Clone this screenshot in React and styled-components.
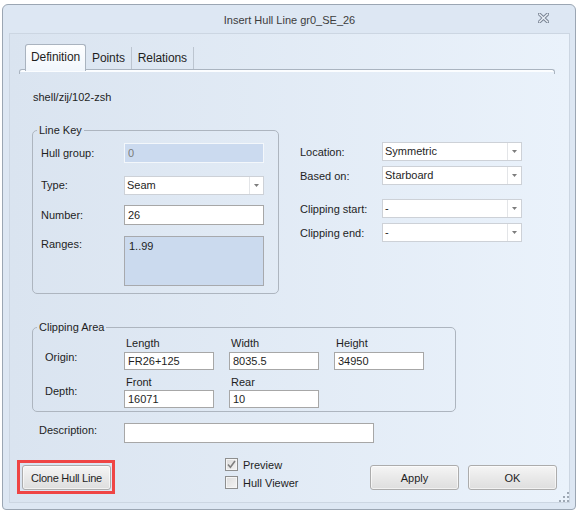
import React from 'react';
import styled, { createGlobalStyle } from 'styled-components';

const Global = createGlobalStyle`
  html, body { margin: 0; padding: 0; background: #ffffff; }
  body {
    width: 578px; height: 514px; overflow: hidden;
    font-family: "Liberation Sans", Arial, sans-serif;
    font-size: 11px; color: #1e1e1e;
  }
  * { box-sizing: border-box; }
`;

const Window = styled.div`
  margin: 4px 0 0 2px;
  width: 574px;
  height: 506px;
  border: 1px solid #9ba6b3;
  border-radius: 6px 6px 4px 4px;
  background: #dde7f3;
  padding: 0 5px 6px 6px;
  display: flex;
  flex-direction: column;
`;

const TitleBar = styled.div`
  height: 28px;
  display: grid;
  grid-template-columns: 1fr auto 1fr;
  align-items: center;
`;

const Title = styled.div`
  grid-column: 2;
  font-size: 11px;
  color: #3c3c3c;
  line-height: 14px;
  padding-top: 1px;
`;

const Close = styled.div`
  grid-column: 3;
  justify-self: end;
  align-self: start;
  margin: 8px 21px 0 0;
  width: 11px;
  height: 10px;
  display: flex;
`;

const Client = styled.div`
  flex: 1;
  position: relative;
  border: 1px solid #ccd6e2;
  background: linear-gradient(to right, #dae4f0, #eaf2fb);
  display: flex;
  flex-direction: column;
`;

const TabControl = styled.div`
  margin: 10px 0 0 9px;
  width: 536px;
`;

const TabList = styled.div`
  display: flex;
  align-items: flex-end;
  height: 25px;
  padding-left: 6px;
`;

const Tab = styled.div`
  position: relative;
  z-index: ${p => (p.$active ? 1 : 0)};
  height: ${p => (p.$active ? 27 : 22)}px;
  margin-bottom: ${p => (p.$active ? -2 : 0)}px;
  padding: ${p => (p.$active ? '0 5px 2px' : '0 6px 0')};
  display: flex;
  align-items: center;
  font-size: 12px;
  letter-spacing: -0.1px;
  color: #1e1e1e;
  border-right: 1px solid ${p => (p.$active ? '#a9b3bf' : '#bcc5d0')};
  ${p => p.$active && `
    border-top: 1px solid #a9b3bf;
    border-left: 1px solid #a9b3bf;
    border-radius: 3px 3px 0 0;
    background: linear-gradient(#fdfeff, #f1f6fc);
  `}
`;

const PanelTop = styled.div`
  height: 5px;
  border: 1px solid #aab4c0;
  border-bottom: none;
  border-radius: 3px 3px 0 0;
  background: linear-gradient(to bottom, #fbfdff 0, #fbfdff 2px, transparent 2px);
`;

const Page = styled.div`
  padding-left: 13px;
`;

const PathText = styled.div`
  margin: 16px 0 0 1px;
  line-height: 14px;
`;

const TopSection = styled.div`
  margin-top: 19px;
  display: flex;
  align-items: flex-start;
`;

const GroupBox = styled.fieldset`
  margin: ${p => p.$mt || 0}px 0 0 0;
  padding: 0;
  min-width: 0;
  width: ${p => p.$w}px;
  height: ${p => p.$h}px;
  border: 1px solid #adb5bf;
  border-radius: 5px;
`;

const Legend = styled.legend`
  margin-left: 4px;
  padding: 0 2px;
  line-height: 14px;
  font-size: 11px;
`;

const GroupInner = styled.div`
  padding: ${p => p.$pt}px 0 0 ${p => p.$pl}px;
`;

const FormRow = styled.div`
  display: flex;
  align-items: ${p => (p.$top ? 'flex-start' : 'center')};
  margin-top: ${p => p.$gap || 0}px;
`;

const Label = styled.div`
  width: ${p => p.$w}px;
  flex: none;
  line-height: 13px;
  padding-top: ${p => p.$pt || 0}px;
  margin-left: ${p => p.$ml || 0}px;
`;

const TextBox = styled.input`
  width: ${p => p.$w}px;
  height: ${p => p.$h}px;
  margin: 0;
  padding: 0 0 0 3px;
  border: 1px solid ${p => (p.$disabled ? '#f3f7fb' : '#a7a7a7')};
  background: ${p => (p.$disabled ? '#cbdaef' : '#ffffff')};
  color: ${p => (p.$disabled ? '#7a7a7a' : '#1e1e1e')};
  font: 11px "Liberation Sans", Arial, sans-serif;
  outline: none;
  border-radius: 0;
`;

const TextArea = styled.textarea`
  width: 140px;
  height: 50px;
  margin: 0;
  padding: 3px 0 0 4px;
  border: 1px solid #a7a9ad;
  background: #cbdaee;
  color: #1e1e1e;
  font: 11px "Liberation Sans", Arial, sans-serif;
  line-height: 13px;
  resize: none;
  outline: none;
  overflow: hidden;
`;

const SelectBox = styled.div`
  width: 140px;
  height: 19px;
  background: #ffffff;
  border: 1px solid #cdd1d7;
  display: flex;
  align-items: stretch;
`;

const SelectValue = styled.span`
  flex: 1;
  padding-left: 2px;
  line-height: 17px;
`;

const SelectArrow = styled.span`
  width: 14px;
  border-left: 1px solid #e3e5e8;
  display: flex;
  align-items: center;
  justify-content: center;
`;

const RightCol = styled.div`
  margin-left: 21px;
  padding-top: 19px;
`;

const ClipGrid = styled.div`
  display: grid;
  grid-template-columns: 64px 90px 90px 90px;
  grid-template-rows: 15px 20px 18px 19px;
  column-gap: 15px;
  padding: 2px 0 0 12px;
`;

const GridText = styled.div`
  grid-row: ${p => p.$row};
  grid-column: ${p => p.$col};
  align-self: ${p => p.$align || 'start'};
  line-height: ${p => p.$lh || 13}px;
  margin-top: ${p => p.$shift || 0}px;
  padding-left: ${p => (p.$col > 1 ? 2 : 0)}px;
`;

const GridField = styled(TextBox)`
  grid-row: ${p => p.$row};
  grid-column: ${p => p.$col};
  align-self: ${p => p.$align || 'center'};
`;

const DescRow = styled.div`
  margin-top: 11px;
  display: flex;
  align-items: flex-start;
`;

const BottomBar = styled.div`
  margin-top: 15px;
  display: flex;
  align-items: flex-start;
`;

const Highlight = styled.div`
  margin: 2px 0 0 7px;
  border: 3px solid #ef4545;
  padding: 2px 1px 1px 2px;
`;

const Button = styled.button`
  width: 89px;
  height: 25px;
  margin: ${p => p.$m || 0};
  padding: 0;
  border: 1px solid #acacac;
  border-radius: 3px;
  background: linear-gradient(#f5f5f5, #e9e9e9 50%, #dedede);
  font: 11px "Liberation Sans", Arial, sans-serif;
  letter-spacing: ${p => p.$ls || 0}px;
  color: #1e1e1e;
  box-shadow: inset 0 0 0 1px rgba(255,255,255,0.6);
`;

const CheckGroup = styled.div`
  margin-left: 110px;
  display: flex;
  flex-direction: column;
  gap: 5px;
`;

const CheckRow = styled.div`
  display: flex;
  align-items: center;
  height: 13px;
`;

const CheckBox = styled.span`
  width: 13px;
  height: 13px;
  border: 1px solid #8e8f8f;
  background: linear-gradient(135deg, #dcdcdc, #f4f4f4);
  box-shadow: inset 0 0 0 1px #f5f5f5;
  display: flex;
  align-items: center;
  justify-content: center;
`;

const CheckLabel = styled.span`
  margin-left: 5px;
  line-height: 13px;
  padding-top: 1px;
`;

const Grip = styled.svg`
  position: absolute;
  right: 0;
  bottom: 0;
`;

const Arrow = () => (
  <svg width="5" height="3" viewBox="0 0 5 3">
    <path d="M0 0H5L2.5 3Z" fill="#7d7d7d" />
  </svg>
);

const Select = ({ value }) => (
  <SelectBox>
    <SelectValue>{value}</SelectValue>
    <SelectArrow><Arrow /></SelectArrow>
  </SelectBox>
);

export default function App() {
  return (
    <>
      <Global />
      <Window>
        <TitleBar>
          <Title>Insert Hull Line gr0_SE_26</Title>
          <Close>
            <svg width="11" height="10" viewBox="0 0 11 10">
              <path d="M1.5 1.2L9.5 8.8M9.5 1.2L1.5 8.8" stroke="#7b8696" strokeWidth="3.4" strokeLinecap="square" />
              <path d="M1.5 1.2L9.5 8.8M9.5 1.2L1.5 8.8" stroke="#e9eff6" strokeWidth="1.4" strokeLinecap="square" />
            </svg>
          </Close>
        </TitleBar>
        <Client>
          <TabControl>
            <TabList>
              <Tab $active>Definition</Tab>
              <Tab>Points</Tab>
              <Tab>Relations</Tab>
            </TabList>
            <PanelTop />
            <Page>
              <PathText>shell/zij/102-zsh</PathText>
              <TopSection>
                <GroupBox $w={247} $h={171}>
                  <Legend>Line Key</Legend>
                  <GroupInner $pt={6} $pl={8}>
                    <FormRow>
                      <Label $w={83}>Hull group:</Label>
                      <TextBox $w={140} $h={20} $disabled readOnly value="0" />
                    </FormRow>
                    <FormRow $gap={13}>
                      <Label $w={83}>Type:</Label>
                      <Select value="Seam" />
                    </FormRow>
                    <FormRow $gap={10}>
                      <Label $w={83}>Number:</Label>
                      <TextBox $w={140} $h={20} readOnly value="26" />
                    </FormRow>
                    <FormRow $gap={11} $top>
                      <Label $w={83} $pt={2}>Ranges:</Label>
                      <TextArea readOnly value="1..99" />
                    </FormRow>
                  </GroupInner>
                </GroupBox>
                <RightCol>
                  <FormRow>
                    <Label $w={82} $pt={2}>Location:</Label>
                    <Select value="Symmetric" />
                  </FormRow>
                  <FormRow $gap={5}>
                    <Label $w={82} $pt={1}>Based on:</Label>
                    <Select value="Starboard" />
                  </FormRow>
                  <FormRow $gap={14}>
                    <Label $w={82} $pt={2}>Clipping start:</Label>
                    <Select value="-" />
                  </FormRow>
                  <FormRow $gap={5}>
                    <Label $w={82} $pt={2}>Clipping end:</Label>
                    <Select value="-" />
                  </FormRow>
                </RightCol>
              </TopSection>
              <GroupBox $w={424} $h={92} $mt={26}>
                <Legend>Clipping Area</Legend>
                <ClipGrid>
                  <GridText $row={1} $col={2} $lh={15}>Length</GridText>
                  <GridText $row={1} $col={3} $lh={15}>Width</GridText>
                  <GridText $row={1} $col={4} $lh={15}>Height</GridText>
                  <GridText $row={2} $col={1}>Origin:</GridText>
                  <GridField $row={2} $col={2} $w={90} $h={18} readOnly value="FR26+125" />
                  <GridField $row={2} $col={3} $w={90} $h={18} readOnly value="8035.5" />
                  <GridField $row={2} $col={4} $w={90} $h={18} readOnly value="34950" />
                  <GridText $row={3} $col={2} $align="end">Front</GridText>
                  <GridText $row={3} $col={3} $align="end">Rear</GridText>
                  <GridText $row={4} $col={1} $shift={-4}>Depth:</GridText>
                  <GridField $row={4} $col={2} $w={90} $h={18} $align="end" readOnly value="16071" />
                  <GridField $row={4} $col={3} $w={90} $h={18} $align="end" readOnly value="10" />
                </ClipGrid>
              </GroupBox>
              <DescRow>
                <Label $w={85} $ml={7} $pt={1}>Description:</Label>
                <TextBox $w={250} $h={20} readOnly value="" />
              </DescRow>
            </Page>
          </TabControl>
          <BottomBar>
            <Highlight>
              <Button $ls={-0.25}>Clone Hull Line</Button>
            </Highlight>
            <CheckGroup>
              <CheckRow>
                <CheckBox>
                  <svg width="9" height="9" viewBox="0 0 9 9">
                    <path d="M1 4.5L3.4 7.2L8 1" fill="none" stroke="#7f7f7f" strokeWidth="1.6" />
                  </svg>
                </CheckBox>
                <CheckLabel>Preview</CheckLabel>
              </CheckRow>
              <CheckRow>
                <CheckBox />
                <CheckLabel>Hull Viewer</CheckLabel>
              </CheckRow>
            </CheckGroup>
            <Button $m="7px 0 0 auto">Apply</Button>
            <Button $m="7px 12px 0 9px">OK</Button>
          </BottomBar>
          <Grip width="10" height="10" viewBox="0 0 10 10">
            <rect x="8" y="0" width="2" height="2" fill="#9ea8b4" />
            <rect x="4" y="4" width="2" height="2" fill="#9ea8b4" />
            <rect x="8" y="4" width="2" height="2" fill="#9ea8b4" />
            <rect x="0" y="8" width="2" height="2" fill="#9ea8b4" />
            <rect x="4" y="8" width="2" height="2" fill="#9ea8b4" />
            <rect x="8" y="8" width="2" height="2" fill="#9ea8b4" />
          </Grip>
        </Client>
      </Window>
    </>
  );
}
